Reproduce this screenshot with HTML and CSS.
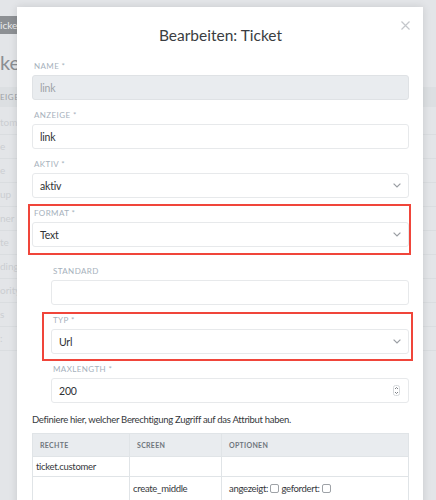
FILE: index.html
```html
<!DOCTYPE html>
<html lang="de">
<head>
<meta charset="utf-8">
<title>Bearbeiten: Ticket</title>
<link rel="stylesheet" href="styles.css">
</head>
<body>
<div class="app">
  <div class="bg-page">
    <div class="bg-btn">icket</div>
    <div class="bg-title">ket</div>
    <div class="bg-table">
      <div class="bg-head">EIGE</div>
      <div class="bg-row">tome</div>
      <div class="bg-row">e</div>
      <div class="bg-row">e</div>
      <div class="bg-row">up</div>
      <div class="bg-row">ner</div>
      <div class="bg-row">te</div>
      <div class="bg-row">ding</div>
      <div class="bg-row">ority</div>
      <div class="bg-row">s</div>
      <div class="bg-row">:</div>
    </div>
  </div>

  <div class="modal">
    <button class="close" aria-label="Schließen">
      <svg width="9" height="9" viewBox="0 0 9 9"><path d="M0.5 0.5 L8.5 8.5 M8.5 0.5 L0.5 8.5" stroke="#c4c7cb" stroke-width="1.2" fill="none"/></svg>
    </button>
    <h2 class="modal-title">Bearbeiten: Ticket</h2>

    <div class="group">
      <div class="label">Name *</div>
      <div class="control disabled">link</div>
    </div>
    <div class="group">
      <div class="label">Anzeige *</div>
      <div class="control">link</div>
    </div>
    <div class="group">
      <div class="label">Aktiv *</div>
      <div class="control select">aktiv<svg class="chev" width="8" height="5" viewBox="0 0 8 5"><path d="M0.6 0.6 L4 4 L7.4 0.6" stroke="#9a9ea3" stroke-width="1.2" fill="none"/></svg></div>
    </div>
    <div class="group marked mark-format">
      <div class="label">Format *</div>
      <div class="control select">Text<svg class="chev" width="8" height="5" viewBox="0 0 8 5"><path d="M0.6 0.6 L4 4 L7.4 0.6" stroke="#9a9ea3" stroke-width="1.2" fill="none"/></svg></div>
    </div>

    <div class="sub">
      <div class="group">
        <div class="label">Standard</div>
        <div class="control"></div>
      </div>
      <div class="group marked mark-typ">
        <div class="label">Typ *</div>
        <div class="control select">Url<svg class="chev" width="8" height="5" viewBox="0 0 8 5"><path d="M0.6 0.6 L4 4 L7.4 0.6" stroke="#9a9ea3" stroke-width="1.2" fill="none"/></svg></div>
      </div>
      <div class="group">
        <div class="label">Maxlength *</div>
        <div class="control select">200<svg class="spin" width="7" height="11" viewBox="0 0 7 11"><rect x="0.5" y="0.5" width="6" height="10" rx="2" fill="#fff" stroke="#d5d8db"/><path d="M2 4 L3.5 2.5 L5 4 M2 7 L3.5 8.5 L5 7" stroke="#6f7378" stroke-width="0.9" fill="none"/></svg></div>
      </div>
    </div>

    <p class="desc">Definiere hier, welcher Berechtigung Zugriff auf das Attribut haben.</p>

    <table class="perm">
      <thead>
        <tr><th class="c1">Rechte</th><th class="c2">Screen</th><th class="c3">Optionen</th></tr>
      </thead>
      <tbody>
        <tr class="r1"><td>ticket.customer</td><td></td><td></td></tr>
        <tr class="r2"><td></td><td>create_middle</td><td class="opts">angezeigt: <span class="cb"></span> gefordert: <span class="cb"></span></td></tr>
      </tbody>
    </table>
  </div>
</div>
</body>
</html>
```

FILE: styles.css
```css
html, body {
  margin: 0;
  padding: 0;
}
body {
  width: 436px;
  height: 500px;
  overflow: hidden;
  background: #e3e5e8;
  font-family: "Lato", "Liberation Sans", sans-serif;
}
.app {
  position: relative;
  width: 436px;
  height: 500px;
  overflow: hidden;
}

/* background page behind the overlay */
.bg-page {
  display: flex;
  flex-direction: column;
  padding-top: 16px;
  color: #cdd0d4;
}
.bg-btn {
  width: 40px;
  height: 18px;
  background: #8d9094;
  color: #ececec;
  font-size: 10px;
  line-height: 18px;
}
.bg-title {
  margin-top: 16px;
  font-size: 20px;
  line-height: 24px;
  color: #8b8e92;
}
.bg-table {
  margin-top: 13px;
  display: flex;
  flex-direction: column;
}
.bg-head {
  height: 20px;
  line-height: 20px;
  background: #dcdfe2;
  color: #9da1a6;
  font-size: 8px;
  letter-spacing: 0.5px;
  margin-bottom: 4px;
}
.bg-row {
  height: 23px;
  line-height: 23px;
  border-bottom: 1px solid #dadde0;
  font-size: 10px;
  color: #cbced2;
}

/* modal */
.modal {
  position: absolute;
  left: 17px;
  top: 7px;
  width: 406px;
  height: 520px;
  box-sizing: border-box;
  background: #fff;
  padding: 18px 14px 0 15px;
  box-shadow: 0 0 8px rgba(0, 0, 0, 0.12);
  color: #3a3d41;
}
.close {
  position: absolute;
  right: 13px;
  top: 14px;
  width: 9px;
  height: 9px;
  padding: 0;
  border: 0;
  background: none;
  display: flex;
}
.modal-title {
  margin: 0 0 16px;
  text-align: center;
  font-size: 15.5px;
  line-height: 20px;
  font-weight: 400;
  color: #3a3d41;
}
.group {
  position: relative;
  margin-bottom: 10px;
}
.label {
  font-size: 8px;
  line-height: 10px;
  letter-spacing: 0.4px;
  text-transform: uppercase;
  color: #a6b1bc;
  margin-bottom: 4px;
  padding-left: 2px;
}
.control {
  height: 25px;
  box-sizing: border-box;
  border: 1px solid #e7e9eb;
  border-radius: 3px;
  padding: 0 7px;
  display: flex;
  align-items: center;
  font-size: 10.5px;
  letter-spacing: -0.2px;
  color: #2f3235;
  background: #fff;
}
.control.disabled {
  background: #e9ecef;
  border-color: #dfe2e5;
  color: #9ea3a8;
}
.select {
  justify-content: space-between;
}
.spin {
  margin-right: 1px;
}
.marked::after {
  content: "";
  position: absolute;
  border: 2px solid #f0453a;
  pointer-events: none;
}
.mark-format::after {
  top: -4px;
  left: -4px;
  right: -2px;
  bottom: -8px;
}
.mark-typ::after {
  top: -3px;
  left: -9px;
  right: -4px;
  bottom: -7px;
}
.sub {
  padding: 9px 0 0 19px;
}
.desc {
  margin: 0 0 6px;
  font-size: 9.5px;
  letter-spacing: -0.3px;
  line-height: 14px;
  color: #35383c;
}
.perm {
  width: 377px;
  border-collapse: collapse;
  font-size: 9.5px;
  letter-spacing: -0.3px;
  color: #35383c;
}
.perm th, .perm td {
  border: 1px solid #e0e4e7;
  text-align: left;
}
.perm th {
  height: 23px;
  box-sizing: border-box;
  background: #e9ecef;
  font-size: 7px;
  font-weight: 700;
  letter-spacing: 0.3px;
  text-transform: uppercase;
  color: #6f767d;
  padding: 0 7px;
}
.perm .c1 { width: 97px; }
.perm .c2 { width: 92px; }
.perm td {
  padding: 0 3px;
}
.perm .r1 td { height: 19px; }
.perm .r2 td { height: 23px; }
.perm td.opts {
  padding-left: 7px;
  white-space: nowrap;
}
.cb {
  display: inline-block;
  width: 7px;
  height: 7px;
  border: 1px solid #9ea2a7;
  border-radius: 2px;
  vertical-align: -1px;
}
```
